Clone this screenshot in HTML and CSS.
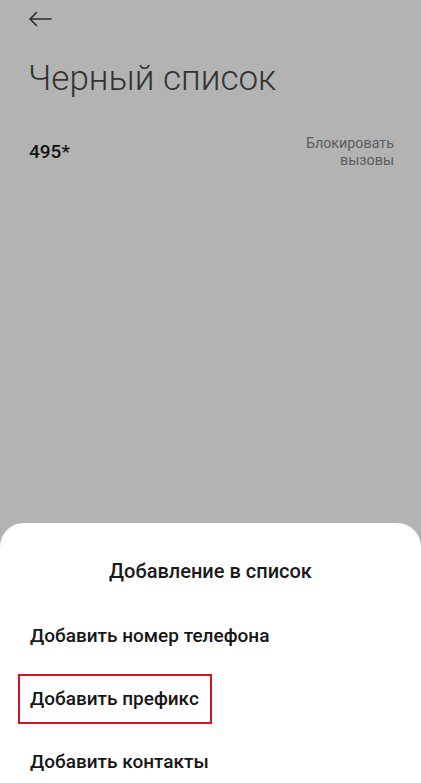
FILE: index.html
```html
<!DOCTYPE html>
<html lang="ru">
<head>
<meta charset="utf-8">
<title>Черный список</title>
<link rel="stylesheet" href="styles.css">
</head>
<body>
<div class="screen">
  <header class="topbar">
    <svg class="back" width="24" height="16" viewBox="0 0 24 16" aria-hidden="true">
      <path d="M23 8H2 M8.5 1.5L2 8l6.5 6.5" fill="none" stroke="#2e2e2e" stroke-width="1.6" stroke-linecap="round" stroke-linejoin="round"/>
    </svg>
  </header>
  <h1 class="title">Черный список</h1>
  <div class="entry">
    <span class="entry-number">495*</span>
    <span class="entry-mode">Блокировать<br>вызовы</span>
  </div>
  <div class="sheet">
    <div class="sheet-title">Добавление в список</div>
    <div class="sheet-items">
      <div class="sheet-item"><span class="sheet-label">Добавить номер телефона</span></div>
      <div class="sheet-item"><span class="sheet-label is-marked">Добавить префикс</span></div>
      <div class="sheet-item"><span class="sheet-label">Добавить контакты</span></div>
    </div>
  </div>
</div>
</body>
</html>
```
FILE: styles.css
```css
* { box-sizing: border-box; }
html, body { margin: 0; padding: 0; }
body {
  background: #b3b3b3;
  font-family: Roboto, "Noto Sans", "Liberation Sans", sans-serif;
  overflow: hidden;
}
.screen {
  width: 421px;
  height: 783px;
  display: flex;
  flex-direction: column;
  overflow: hidden;
}
.topbar {
  height: 40px;
  padding: 11px 0 0 28px;
}
.back { display: block; }
.title {
  margin: 19px 0 0 28px;
  font-weight: 300;
  font-size: 35px;
  line-height: 40px;
  color: #333333;
}
.entry {
  margin-top: 36px;
  padding: 0 27px 0 29px;
  display: flex;
  justify-content: space-between;
  align-items: flex-start;
}
.entry-number {
  margin-top: 5px;
  font-size: 19px;
  line-height: 24px;
  font-weight: 500;
  color: #141414;
}
.entry-mode {
  font-size: 14.3px;
  line-height: 17px;
  color: #5c5c5c;
  text-align: right;
}
.sheet {
  margin-top: auto;
  height: 260px;
  background: #ffffff;
  border-radius: 24px 24px 0 0;
  padding-top: 36px;
}
.sheet-title {
  text-align: center;
  font-size: 20px;
  line-height: 24px;
  font-weight: 500;
  color: #1a1a1a;
}
.sheet-items { margin-top: 21px; }
.sheet-item {
  height: 63px;
  padding-left: 18px;
  display: flex;
  align-items: center;
}
.sheet-label {
  display: inline-flex;
  align-items: center;
  height: 50px;
  padding: 0 11px 0 10px;
  border: 2px solid transparent;
  font-size: 19px;
  font-weight: 500;
  color: #161616;
}
.sheet-label.is-marked { border-color: #d3161d; }
```
